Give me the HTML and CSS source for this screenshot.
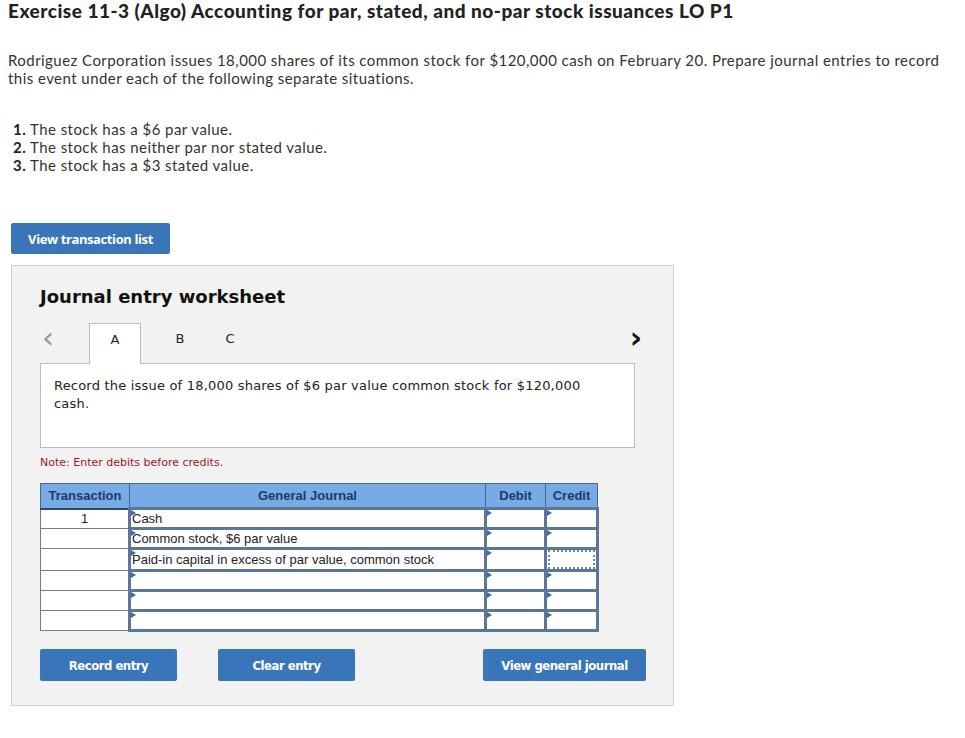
FILE: index.html
```html
<!DOCTYPE html>
<html>

<head>
    <meta charset="utf-8" />
    <title>Exercise 11-3 (Algo)</title>
    <link rel="stylesheet" href="styles.css">
</head>

<body>
    <h1 class="title">Exercise 11-3 (Algo) Accounting for par, stated, and no-par stock issuances LO P1</h1>

    <p class="intro">Rodriguez Corporation issues 18,000 shares of its common stock for $120,000 cash on February 20. Prepare journal entries to record this event under each of the following separate situations.</p>

    <ol class="cases">
        <li><strong>1.</strong> The stock has a $6 par value.</li>
        <li><strong>2.</strong> The stock has neither par nor stated value.</li>
        <li><strong>3.</strong> The stock has a $3 stated value.</li>
    </ol>

    <button class="btn btn-list">View transaction list</button>

    <div class="worksheet">
        <h2>Journal entry worksheet</h2>

        <div class="tabs">
            <span class="arrow arrow-left">&lsaquo;</span>
            <span class="tab active">A</span>
            <span class="tab">B</span>
            <span class="tab">C</span>
            <span class="arrow arrow-right">&rsaquo;</span>
        </div>

        <div class="desc">Record the issue of 18,000 shares of $6 par value common stock for $120,000 cash.</div>

        <div class="note">Note: Enter debits before credits.</div>

        <table class="journal">
            <tr>
                <th class="col-txn">Transaction</th>
                <th class="col-acct">General Journal</th>
                <th class="col-debit">Debit</th>
                <th class="col-credit">Credit</th>
            </tr>
            <tr>
                <td class="txn">1</td>
                <td class="cell mark">Cash</td>
                <td class="cell mark"></td>
                <td class="cell mark"></td>
            </tr>
            <tr>
                <td class="txn"></td>
                <td class="cell mark">Common stock, $6 par value</td>
                <td class="cell mark"></td>
                <td class="cell mark"></td>
            </tr>
            <tr>
                <td class="txn"></td>
                <td class="cell mark">Paid-in capital in excess of par value, common stock</td>
                <td class="cell mark"></td>
                <td class="cell focus"><div class="dotted"></div></td>
            </tr>
            <tr>
                <td class="txn"></td>
                <td class="cell mark"></td>
                <td class="cell mark"></td>
                <td class="cell mark"></td>
            </tr>
            <tr>
                <td class="txn"></td>
                <td class="cell mark"></td>
                <td class="cell mark"></td>
                <td class="cell mark"></td>
            </tr>
            <tr>
                <td class="txn"></td>
                <td class="cell mark"></td>
                <td class="cell mark"></td>
                <td class="cell mark"></td>
            </tr>
        </table>

        <div class="actions">
            <button class="btn btn-ws">Record entry</button>
            <button class="btn btn-ws">Clear entry</button>
            <button class="btn btn-ws btn-wide">View general journal</button>
        </div>
    </div>
</body>

</html>
```

FILE: styles.css
```css
body {
    margin: 0 8px;
    background-color: #fff;
    color: #333;
    font-family: Lato, 'Open Sans', sans-serif;
}

.title {
    margin: 0;
    font-size: 19px;
    line-height: 22px;
    font-weight: 900;
    letter-spacing: 0.5px;
    color: #222;
}

.intro {
    margin: 29px 0 0;
    font-size: 15px;
    line-height: 18px;
    letter-spacing: 0.45px;
}

.cases {
    list-style: none;
    margin: 33px 0 0 5px;
    padding: 0;
    font-size: 15px;
    line-height: 18px;
    letter-spacing: 0.45px;
}

.cases strong {
    color: #222;
}

.btn {
    border: none;
    border-radius: 2px;
    background-color: #3a75b9;
    color: #fff;
    font-weight: bold;
    cursor: pointer;
}

.btn-list {
    display: block;
    margin: 49px 0 0 3px;
    width: 159px;
    height: 31px;
    font-family: 'Open Sans', sans-serif;
    font-size: 13px;
    letter-spacing: -0.4px;
}

.worksheet {
    margin: 11px 0 0 3px;
    height: 439px;
    width: 633px;
    background-color: #f2f2f2;
    border: 1px solid #cfcfcf;
    padding: 0 0 0 28px;
}

.worksheet h2 {
    margin: 20px 0 0;
    font-family: 'DejaVu Sans', Verdana, sans-serif;
    font-size: 18px;
    line-height: 22px;
    font-weight: bold;
    color: #111;
}

.tabs {
    display: flex;
    align-items: flex-end;
    margin-top: 13px;
    height: 42px;
    font-family: 'DejaVu Sans', Verdana, sans-serif;
    font-size: 13px;
}

.tab {
    width: 50px;
    height: 32px;
    padding-top: 8px;
    text-align: center;
    color: #222;
}

.tab.active {
    background-color: #fff;
    border: 1px solid #bbb;
    border-bottom: none;
    margin-bottom: -1px;
    position: relative;
    z-index: 1;
}

.tab.active + .tab {
    margin-left: 14px;
}

.arrow {
    font-size: 30px;
    line-height: 30px;
    align-self: flex-start;
    margin-top: 2px;
}

.arrow-left {
    width: 49px;
    padding-left: 2px;
    color: #999;
    box-sizing: border-box;
}

.arrow-right {
    margin-left: auto;
    margin-right: 31px;
    color: #111;
    font-weight: bold;
}

.desc {
    width: 595px;
    height: 85px;
    box-sizing: border-box;
    background-color: #fff;
    border: 1px solid #bbb;
    padding: 13px 50px 13px 13px;
    font-family: 'DejaVu Sans', Verdana, sans-serif;
    font-size: 13px;
    line-height: 18px;
    letter-spacing: 0.2px;
    color: #222;
}

.note {
    margin-top: 8px;
    font-family: 'DejaVu Sans', Verdana, sans-serif;
    font-size: 11px;
    line-height: 14px;
    color: #9b2020;
}

.journal {
    margin-top: 13px;
    border-collapse: collapse;
    font-family: 'Liberation Sans', Arial, sans-serif;
    font-size: 13px;
    color: #222;
}

.journal th {
    background-color: #78aae6;
    color: #1f3b63;
    font-size: 13px;
    font-weight: bold;
    height: 23px;
    padding: 0;
    border: 1px solid #4c6888;
    border-bottom: 2px solid #2e4a6a;
}

.col-txn {
    width: 88px;
}

.col-acct {
    width: 355px;
}

.col-debit {
    width: 59px;
}

.col-credit {
    width: 51px;
}

.journal td {
    height: 17px;
    padding: 0 1px;
    background-color: #fff;
}

.txn {
    text-align: center;
    border: 1px solid #7c7c7c;
}

.cell {
    border: 3px solid #5b7696;
    position: relative;
}

.mark::before {
    content: "";
    position: absolute;
    left: 0;
    top: 0;
    border-top: 3px solid transparent;
    border-bottom: 3px solid transparent;
    border-left: 5px solid #3e6aa6;
}

.focus {
    padding: 0;
}

.dotted {
    height: 15px;
    border: 2px dotted #6d88a8;
}

.actions {
    display: flex;
    margin-top: 17px;
}

.btn-ws {
    width: 137px;
    height: 32px;
    font-family: 'DejaVu Sans Condensed', 'DejaVu Sans', sans-serif;
    font-size: 13px;
    letter-spacing: -0.5px;
    margin-right: 41px;
}

.btn-wide {
    width: 163px;
    margin-left: 87px;
    margin-right: 0;
}
```
